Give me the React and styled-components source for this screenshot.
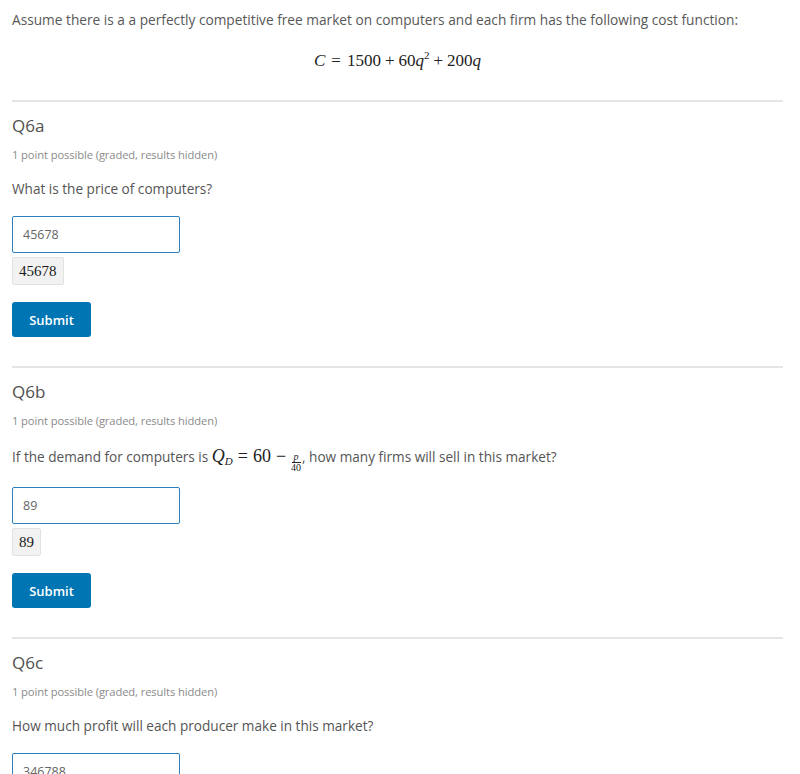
import React from 'react';
import styled, { createGlobalStyle } from 'styled-components';

const GlobalStyle = createGlobalStyle`
  html, body {
    margin: 0;
    padding: 0;
    background: #fff;
  }
  body {
    font-family: "Open Sans", "Liberation Sans", sans-serif;
    color: #555;
  }
`;

const Page = styled.div`
  padding: 10px 17px 0 12px;
`;

const Intro = styled.p`
  margin: 0;
  font-size: 13.7px;
  line-height: 20px;
  color: #585858;
`;

const Formula = styled.div`
  margin: 19px 0 27px;
  text-align: center;
  font-family: "Liberation Serif", "DejaVu Serif", serif;
  font-size: 17px;
  line-height: 24px;
  color: #222;
`;

const Var = styled.i`
  font-style: italic;
`;

const Op = styled.span`
  margin: 0 ${(p) => p.$space || 4}px;
`;

const Sup = styled.sup`
  font-size: 11px;
  vertical-align: 7px;
  line-height: 0;
`;

const Section = styled.section`
  border-top: 2px solid #e5e5e5;
  padding: 12px 0 29px;
`;

const Heading = styled.h3`
  margin: 0;
  font-size: 17px;
  font-weight: 400;
  line-height: 24px;
  color: #505050;
`;

const Points = styled.div`
  margin-top: 10px;
  font-size: 11.2px;
  line-height: 14px;
  letter-spacing: -0.1px;
  color: #8b8b8b;
`;

const Question = styled.p`
  margin: ${(p) => (p.$math ? '16px 0 14px' : '17px 0 17px')};
  font-size: 13.6px;
  line-height: ${(p) => (p.$math ? '26px' : '20px')};
  color: #555;
`;

const InlineMath = styled.span`
  font-family: "Liberation Serif", "DejaVu Serif", serif;
  font-size: 18px;
  line-height: 0;
  color: #222;
`;

const Sub = styled.sub`
  font-size: 11px;
  font-style: italic;
  vertical-align: -3px;
  line-height: 0;
`;

const Frac = styled.span`
  display: inline-flex;
  flex-direction: column;
  align-items: center;
  vertical-align: 2px;
  font-size: 10px;
  line-height: 10px;
  margin: 0 1px 0 0;
`;

const Numer = styled.span`
  font-style: italic;
  padding: 0 2px;
  border-bottom: 1px solid #222;
`;

const AnswerInput = styled.input`
  display: block;
  box-sizing: border-box;
  width: 168px;
  height: 37px;
  margin: 0;
  padding: 0 10px;
  border: 1px solid #2a7fbc;
  border-radius: 2px;
  font-family: "Open Sans", "Liberation Sans", sans-serif;
  font-size: 12.5px;
  color: #666;
  background: #fff;
  outline: none;
`;

const Preview = styled.div`
  display: inline-block;
  box-sizing: border-box;
  margin-top: 4px;
  height: 28px;
  padding: 0 6px;
  border: 1px solid #e2e2e2;
  border-radius: 2px;
  background: #f2f2f2;
  font-family: "Liberation Serif", "DejaVu Serif", serif;
  font-size: 15px;
  line-height: 26px;
  color: #1a1a1a;
`;

const SubmitButton = styled.button`
  display: block;
  box-sizing: border-box;
  margin-top: 17px;
  width: 79px;
  height: 35px;
  border: none;
  border-radius: 3px;
  background: #0075b4;
  color: #fff;
  font-family: "Open Sans", "Liberation Sans", sans-serif;
  font-size: 13px;
  font-weight: 600;
  cursor: pointer;
`;

const questions = [
  {
    id: 'Q6a',
    prompt: 'What is the price of computers?',
    answer: '45678',
  },
  {
    id: 'Q6b',
    math: true,
    answer: '89',
  },
  {
    id: 'Q6c',
    prompt: 'How much profit will each producer make in this market?',
    answer: '346788',
    last: true,
  },
];

function DemandPrompt() {
  return (
    <>
      If the demand for computers is{' '}
      <InlineMath>
        <Var>Q</Var>
        <Sub>D</Sub>
        <Op $space={5}>=</Op>60<Op $space={5}>−</Op>
        <Frac>
          <Numer>p</Numer>
          <span>40</span>
        </Frac>
      </InlineMath>
      , how many firms will sell in this market?
    </>
  );
}

function Problem({ q }) {
  return (
    <Section>
      <Heading>{q.id}</Heading>
      <Points>1 point possible (graded, results hidden)</Points>
      <Question $math={q.math}>{q.math ? <DemandPrompt /> : q.prompt}</Question>
      <AnswerInput defaultValue={q.answer} />
      {!q.last && (
        <>
          <Preview>{q.answer}</Preview>
          <SubmitButton>Submit</SubmitButton>
        </>
      )}
    </Section>
  );
}

export default function App() {
  return (
    <Page>
      <GlobalStyle />
      <Intro>
        Assume there is a a perfectly competitive free market on computers and each firm has the
        following cost function:
      </Intro>
      <Formula>
        <Var>C</Var>
        <Op $space={6}>=</Op>1500<Op>+</Op>60<Var>q</Var>
        <Sup>2</Sup>
        <Op>+</Op>200<Var>q</Var>
      </Formula>
      {questions.map((q) => (
        <Problem key={q.id} q={q} />
      ))}
    </Page>
  );
}
